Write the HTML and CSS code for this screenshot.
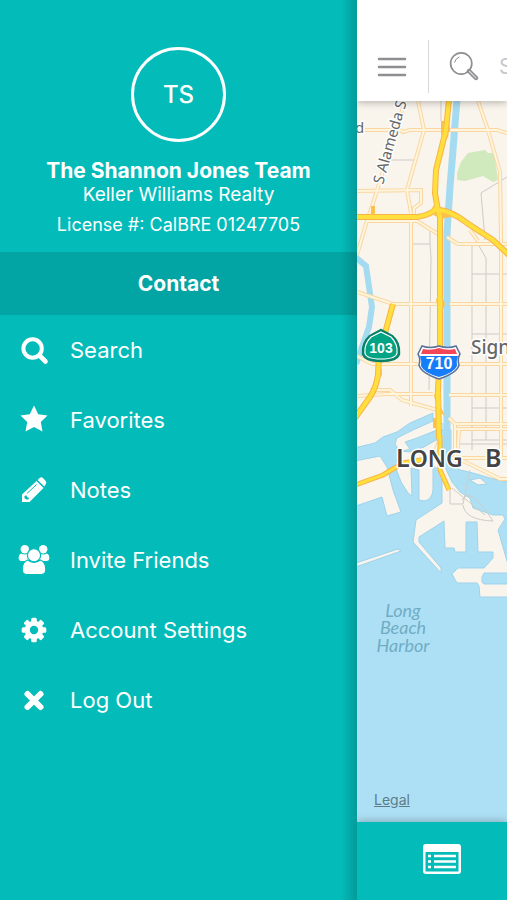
FILE: index.html
```html
<!DOCTYPE html>
<html lang="en">
<head>
<meta charset="UTF-8" />
<meta name="viewport" content="width=device-width, initial-scale=1" />
<title>The Shannon Jones Team</title>
<link rel="stylesheet" href="styles.css">
</head>
<body>
  <aside class="drawer">
    <div class="profile">
      <div class="avatar">TS</div>
      <h1>The Shannon Jones Team</h1>
      <p class="company">Keller Williams Realty</p>
      <p class="license">License #: CalBRE 01247705</p>
    </div>

    <button class="contact-btn" type="button">Contact</button>

    <nav class="menu">
      <a href="#search">
        <svg viewBox="0 0 32 32"><circle cx="14.600" cy="14.500" r="9.200" fill="none" stroke="#fff" stroke-width="4"/><path d="M21.500 21.500l6 6" stroke="#fff" stroke-width="4.600" stroke-linecap="round"/></svg>
        Search
      </a>
      <a href="#favorites">
        <svg viewBox="0 0 32 32"><path d="M16 1.500l4.200 8.700 9.300 1.300-6.700 6.500 1.700 9.500L16 23l-8.500 4.500 1.700-9.500-6.700-6.500 9.300-1.300z" fill="#fff"/></svg>
        Favorites
      </a>
      <a href="#notes">
        <svg viewBox="0 0 32 32"><path d="M4 20.500L18.500 7l7 7L11.500 28H4z" fill="#fff"/><path d="M19.600 6l2-2q1.800-1.500 3.600.2l2.500 2.700q1.400 1.700 0 3.300l-1.400 2.400z" fill="#fff"/><path d="M9 19.500l9.500-9" stroke="#03bcba" stroke-width="1"/><path d="M6.500 22l2-.8.600 2 2 .6-.8 1.800H8.500L6.500 24.200z" fill="#03bcba"/></svg>
        Notes
      </a>
      <a href="#invite">
        <svg viewBox="0 0 32 32" fill="#fff"><circle cx="6.800" cy="5.300" r="4.200"/><circle cx="25.200" cy="5.300" r="4.200"/><path d="M3 9.500q4 2.200 7.200 0l.8 7.500H3.500Q.600 17 .600 13.500.700 10.500 3 9.500zM29 9.500q-4 2.200-7.200 0L21 17h7.500q2.900 0 2.900-3.500-.1-3-2.400-4z"/><g stroke="#03bcba" stroke-width="1.200"><path d="M9.500 16q6.500 4.600 13 0 5.300 2 5.300 9.500 0 5-4.300 5h-15q-4.300 0-4.300-5 0-7.500 5.300-9.500z"/><circle cx="16" cy="11.200" r="6.600"/></g></svg>
        Invite Friends
      </a>
      <a href="#settings">
        <svg viewBox="0 0 32 32"><g fill="#fff"><circle cx="16" cy="16" r="9.300"/><g id="teeth"><rect x="13.200" y="3.700" width="5.600" height="24.600" rx="1.500"/><rect x="3.700" y="13.200" width="24.600" height="5.600" rx="1.500"/></g><use href="#teeth" transform="rotate(45 16 16)"/></g><circle cx="16" cy="16" r="4.200" fill="#03bcba"/></svg>
        Account Settings
      </a>
      <a href="#logout">
        <svg viewBox="0 0 32 32"><path d="M9.500 10l13 13M22.500 10l-13 13" stroke="#fff" stroke-width="6" stroke-linecap="round"/></svg>
        Log Out
      </a>
    </nav>
  </aside>

  <main class="page">
    <header class="topbar">
      <button class="menu-btn" type="button" aria-label="Menu">
        <svg viewBox="0 0 30 20"><path d="M2 2h26M2 10h26M2 18h26" stroke="#8e8e93" stroke-width="2.500" stroke-linecap="round"/></svg>
      </button>
      <label class="search-box">
        <svg viewBox="0 0 30 30" fill="none" stroke="#8e8e93"><circle cx="12.200" cy="11.500" r="10.600" stroke-width="1.700"/><path d="M5.500 10.500q1-4 5-5.700" stroke-width="1"/><path d="M20 19l7 7" stroke-width="4.400" stroke-linecap="round"/><path d="M20.500 19.500l6.400 6.400" stroke="#d8d8da" stroke-width="1.200" stroke-linecap="round"/></svg>
        <input type="text" placeholder="Search" aria-label="Search" />
      </label>
    </header>

    <section class="map">
      <svg viewBox="357 101 150 721" preserveAspectRatio="xMinYMin slice" role="img" aria-label="Map of Long Beach">
        <defs>
          <path id="streets" d="M365 130H400L403 132 410 130H497L507 133M418 101L424 130 407 190 411 213M478 101L487 127 500 172 501 238V460M405 101L385 165 374 200 366 224 357 255M357 191L421 190V203L414 208V214M411 221V406M368 221H417L438 234M447 237L458 244H507M470 230L478 241M357 292L393 304H437M450 304H507M357 356L372 364H507M449 395H507M357 396L386 394H433M370 390H390L402 400 437 410M449 418L455 424H507M455 429H507M455 424V462M459 429L457 464M451 458H507M459 459L490 474 500 479H507M433 458L440 438"/>
          <g id="freeways">
            <path d="M449 99L446 130 436 170 435 193Q437 207 440 217V347L438 390 439 439M355 217H417Q432 215 437 207M436 210Q449 209 467 223L493 240 509 255M393 304L379 355 378 375Q376 388 370 397L355 418"/>
          </g>
          <path id="ramps" d="M440 435V470L449 490M355 485L383 475 403 463 427 459"/>
        </defs>

        <!-- land -->
        <g class="land">
          <path d="M350 95H515V484L507 482 490 478 473 473 460 470 451 463V430H433V413L410 423 397 432 383 437 375 443 350 449z"/>
          <path d="M397 438L413 430 433 421 443 424V430L437 430 417 438 405 442 410 449 400 452 395 444z"/>
          <path d="M350 462L380 456 387 467 393 490 401 512 387 516 382 497 350 508z"/>
          <path d="M400 451L410 452 424 447 436 440H442L444 465 452 482 460 492 470 498 473 508 493 515 503 515 505 519 498 530 507 561 512 573H484L482 577V582L484 584H512V597H480L479 586 477 583H457L452 574 458 568H484L493 558V552H478L477 522H466V552H455L454 548H445L444 521 419 537V542L441 568V573L413 542 416 520 442 503V472L433 466V490Q432 500 424 501L419 500V470L411 468 412 496 408 493 401 482 395 466z"/>
          <path d="M350 565L398 549 401 551 350 569z"/>
          <path d="M470 480l8 5 9-1-7-6z"/>
        </g>
        <path class="park" d="M457 173L461 162 468 153 485 150 488 153 494 153 498 180 493 182 483 176 465 181 457 180z"/>
        <path class="river" d="M457 99L453 150 450 187 447 233V466"/>
        <path class="river west" d="M354 256L366 266 372 307 369 327 356 364"/>

        <!-- parcel lines -->
        <path class="parcel" d="M441 101V121M390 160H414M507 177L481 193 485 240M430 227V244L431 257 429 390M413 244H430M470 230L486 258V440M472 244V450M472 274H507M472 334H507M472 408H507M472 440H507M459 444H507M450 488V504H463L470 470M452 488L485 515M462 500Q470 485 493 521 465 520 463 505"/>

        <!-- streets and freeways, casing first and fill on top -->
        <use href="#streets" class="street-casing"/>
        <use href="#streets" class="street-fill"/>
        <use href="#ramps" class="ramp-casing"/>
        <use href="#freeways" class="freeway-casing"/>
        <path class="interchange" d="M430 213L436 200 440 211 455 216 441 219zM441 121h3v10h6v-9l-2 16-7-3zM371 206h4v9h-4zM436 300l4-10 5 14-5 14zM435 392h6v15l4 9-7-5-4-15zM433 418h4v10h-4zM375 367l7 2v6l-4 6z"/>
        <use href="#ramps" class="ramp-fill"/>
        <use href="#freeways" class="freeway-fill"/>

        <!-- route shields -->
        <path d="M381 330Q387 333 392 336 400 343 399 354 397 361 381 361 365 361 363 354 362 343 370 336 375 333 381 330z" fill="#00a383" stroke="#0b8068" stroke-width="2.500"/>
        <path d="M381 332Q387 335 391 337 398 344 397 353 396 359 381 359 366 359 365 353 364 344 371 337 375 335 381 332z" fill="none" stroke="#fff" stroke-width="1.200"/>
        <text class="shield" x="381" y="353">103</text>
        <path d="M422 346Q430 349 439 346 448 349 456 346L460 354Q457 359 459 365 457 373 439 379 421 373 419 365 421 359 418 354z" fill="#fff" stroke="#59719b" stroke-width="1.500"/>
        <path d="M423 349Q431 351 439 348 447 351 455 349L457 354H421z" fill="#f44657"/>
        <path d="M420 356H458Q456 361 457 366 454 373 439 377 424 373 421 366 422 361 420 356z" fill="#167dfa"/>
        <text class="shield large" x="439" y="369">710</text>

        <!-- place names -->
        <text class="street-name" x="355" y="133">d</text>
        <text class="street-name" transform="translate(383 185) rotate(-74)">S Alameda S</text>
        <text class="town" x="471" y="354">Sign</text>
        <text class="city" x="396" y="467">L<tspan class="small">ONG</tspan></text>
        <text class="city" x="485" y="467">B</text>
        <text class="water-name" x="403" y="617">Long<tspan x="403" y="634">Beach</tspan><tspan x="403" y="652">Harbor</tspan></text>
      </svg>
      <a class="legal" href="#legal">Legal</a>
    </section>

    <footer class="toolbar">
      <button type="button" aria-label="List view">
        <svg viewBox="0 0 38 30"><rect width="38" height="30" rx="3" fill="#fff"/><path d="M2.500 8h33v19.500h-33z" fill="#03bcba"/><path d="M5 12h3M5 17.500h3M5 23h3M11 12h22M11 17.500h22M11 23h22" stroke="#fff" stroke-width="2.600"/></svg>
      </button>
    </footer>
  </main>
</body>
</html>
```
FILE: styles.css
```css
* {
  box-sizing: border-box;
}
body {
  display: flex;
  min-height: 100vh;
  margin: 0;
  font-family: Inter, "Liberation Sans", sans-serif;
  background: #03bcba;
  color: #fff;
}
h1, p {
  margin: 0;
}
button {
  padding: 0;
  border: 0;
  background: none;
  font-family: inherit;
  cursor: pointer;
}
svg {
  display: block;
}

/* side drawer */
.drawer {
  position: relative;
  flex: 0 0 calc(100% - 150px);
  background: #03bcba;
}
.drawer::after {
  content: "";
  position: absolute;
  top: 0;
  right: 0;
  bottom: 0;
  width: 16px;
  background: linear-gradient(to right, rgba(0, 60, 60, 0), rgba(0, 60, 60, 0.26));
  pointer-events: none;
}
.profile {
  padding: 47px 0 16px;
  text-align: center;
}
.avatar {
  display: flex;
  align-items: center;
  justify-content: center;
  width: 95px;
  height: 95px;
  margin: 0 auto 16px;
  border: 3px solid #fff;
  border-radius: 50%;
  font-size: 24px;
  font-weight: 500;
}
h1 {
  font-size: 21px;
  font-weight: 700;
  line-height: 26px;
}
.company, .license {
  line-height: 22px;
}
.company {
  font-size: 19px;
}
.license {
  margin-top: 8px;
  font-size: 18px;
}
.contact-btn {
  display: block;
  width: 100%;
  height: 63px;
  background: #02a5a3;
  color: #fff;
  font-size: 21px;
  font-weight: 700;
}
.menu a {
  display: flex;
  align-items: center;
  gap: 20px;
  height: 70px;
  padding-left: 18px;
  color: #fff;
  font-size: 22px;
  text-decoration: none;
}
.menu svg {
  width: 32px;
  height: 32px;
}

/* map page */
.page {
  display: flex;
  flex: 1;
  flex-direction: column;
  min-width: 0;
  overflow: hidden;
}
.topbar, .toolbar {
  z-index: 1;
}
.topbar {
  display: flex;
  padding: 40px 0 8px 20px;
  background: #fff;
  box-shadow: 0 1px 8px rgba(0, 0, 0, 0.3);
}
.menu-btn svg {
  width: 30px;
  height: 20px;
}
.search-box {
  display: flex;
  flex: 1;
  align-items: center;
  gap: 20px;
  height: 53px;
  margin-left: 21px;
  padding-left: 20px;
  border-left: 1px solid #d8d8da;
}
.search-box svg {
  flex: none;
  width: 30px;
  height: 30px;
}
.search-box input {
  width: 100%;
  min-width: 120px;
  padding: 0;
  border: 0;
  outline: 0;
  background: none;
  font-family: inherit;
  font-size: 21px;
}
.search-box input::placeholder {
  color: #c7c7cc;
}
.map {
  position: relative;
  flex: 1;
  min-height: 0;
  background: #aee0f5;
}
.map > svg {
  width: 100%;
  height: 100%;
}
.land {
  fill: #f9f4ec;
  stroke: #9fd3ea;
  stroke-width: 1;
}
.park {
  fill: #d0e9bd;
}
.river {
  fill: none;
  stroke: #a5dbf0;
  stroke-width: 7;
}
.river.west {
  stroke-width: 6;
}
.parcel {
  fill: none;
  stroke: #cfccc6;
  stroke-width: 1;
}
.street-casing {
  fill: none;
  stroke: #fad7a2;
  stroke-width: 4;
}
.street-fill {
  fill: none;
  stroke: #fef5dc;
  stroke-width: 2;
}
.freeway-casing, .ramp-casing {
  fill: none;
  stroke: #f8b24a;
  stroke-width: 6;
}
.freeway-fill, .ramp-fill {
  fill: none;
  stroke: #ffdf3c;
  stroke-width: 4;
}
.ramp-casing {
  stroke-width: 5;
}
.ramp-fill {
  stroke-width: 3;
}
.interchange {
  fill: #fbc14a;
}
.shield {
  fill: #fff;
  font-size: 14px;
  font-weight: 700;
  font-family: "Liberation Sans", sans-serif;
  text-anchor: middle;
}
.shield.large {
  font-size: 16px;
}
.street-name, .town, .city {
  fill: #666;
  stroke: #fff;
  stroke-width: 3;
  stroke-linejoin: round;
  paint-order: stroke;
  font-family: "Noto Sans", sans-serif;
  font-size: 15px;
}
.town {
  font-size: 19px;
  font-weight: 500;
}
.city {
  fill: #444;
  font-size: 25px;
  font-weight: 600;
}
.city .small {
  font-size: 23px;
}
.water-name {
  fill: #70adc4;
  font-family: Lato, sans-serif;
  font-size: 18px;
  font-style: italic;
  text-anchor: middle;
}
.legal {
  position: absolute;
  bottom: 14px;
  left: 17px;
  color: #5d7d89;
  font-size: 14px;
}
.toolbar {
  height: 78px;
  padding: 22px 0 0 66px;
  background: #03bcba;
  box-shadow: 0 -1px 8px rgba(0, 0, 0, 0.25);
}
.toolbar svg {
  width: 38px;
  height: 30px;
}
```
